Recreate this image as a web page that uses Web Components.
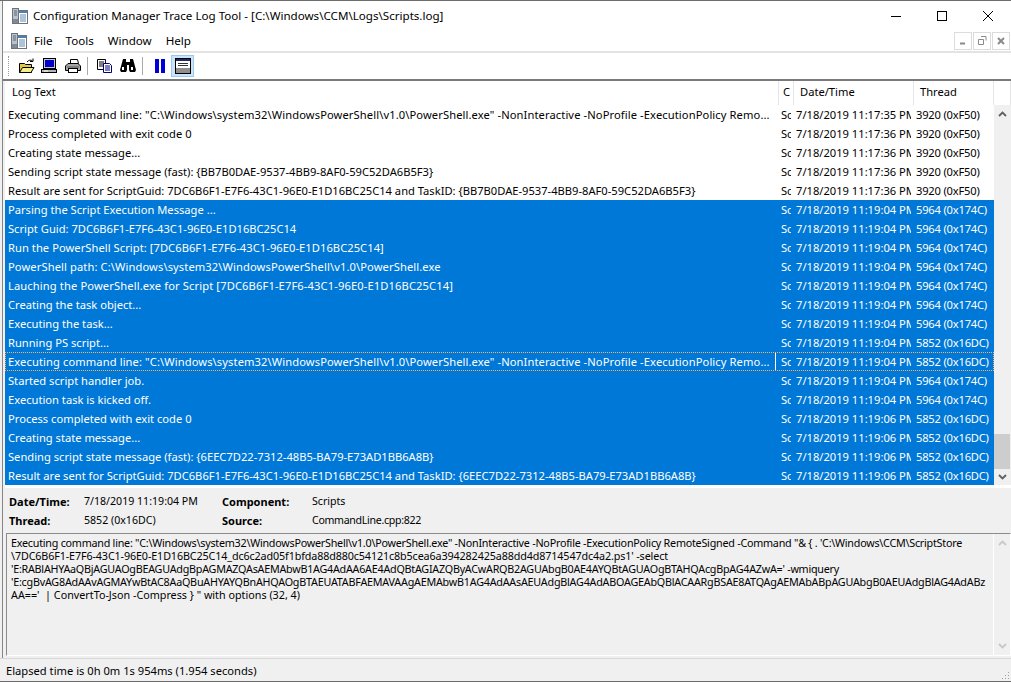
<!DOCTYPE html>
<html>
<head>
<meta charset="utf-8">
<title>Trace Log</title>
<style>
html, body { margin: 0; height: 100%; overflow: hidden; background: #f0f0f0; }
body { font: 11.17px "Noto Sans", "Liberation Sans", sans-serif; }
</style>
</head>
<body>
<trace-window>
  <title-bar>Configuration Manager Trace Log Tool - [C:\Windows\CCM\Logs\Scripts.log]</title-bar>
  <menu-bar></menu-bar>
  <tool-bar></tool-bar>
  <log-list></log-list>
  <detail-pane></detail-pane>
  <status-bar>Elapsed time is 0h 0m 1s 954ms (1.954 seconds)</status-bar>
</trace-window>

<script>
// same little server + page picture in the title bar and the menu bar
const docIcon = `<svg width="16" height="16" viewBox="0 0 16 16"><rect x="0.5" y="0.5" width="6" height="15" fill="#b9c2cc" stroke="#6a7480"/><path d="M2 3h3M2 5h3M2 7h3" stroke="#5c6670"/><rect x="1" y="11" width="5" height="4" fill="#7f8a96"/><rect x="6.500" y="2.500" width="9" height="13" fill="#fff" stroke="#6a7480"/><rect x="7" y="3" width="8" height="2" fill="#4d7fb5"/><path d="M8 7h6M8 9h6M8 11h6M8 13h6" stroke="#5f88b0"/></svg>`;

class TraceWindow extends HTMLElement {
    constructor() {
        super();
        this.attachShadow({ mode: "open" });
        this.shadowRoot.innerHTML = `<style>
            :host { display: flex; flex-direction: column; width: 1011px; height: 682px; box-sizing: border-box; padding-left: 3px;
                border-top: 1px solid #6d6d6d; border-bottom: 1px solid #6d6d6d;
                background: linear-gradient(90deg, #f0f0f0 2px, #858585 2px, #858585 3px, #f0f0f0 3px); }
        </style><slot></slot>`;
    }
}

class TitleBar extends HTMLElement {
    constructor() {
        super();
        this.attachShadow({ mode: "open" });
        this.shadowRoot.innerHTML = `<style>
            :host { display: flex; align-items: center; height: 29px; background: #fff; padding-left: 9px; color: #000; font-size: 11.6px; flex: none; }
            .t { margin-left: 5px; flex: 1; white-space: nowrap; }
            .b { width: 46px; height: 29px; display: flex; align-items: center; justify-content: center; }
        </style>
        ${docIcon}<span class="t"><slot></slot></span>
        <div class="b"><svg width="10" height="10"><path d="M0 5.500h10" stroke="#000"/></svg></div>
        <div class="b"><svg width="10" height="10"><rect x=".5" y=".5" width="9" height="9" fill="none" stroke="#000"/></svg></div>
        <div class="b"><svg width="10" height="10"><path d="M0 0l10 10M10 0L0 10" stroke="#000"/></svg></div>`;
    }
}

class MenuBar extends HTMLElement {
    constructor() {
        super();
        this.attachShadow({ mode: "open" });
        this.shadowRoot.innerHTML = `<style>
            :host { display: flex; align-items: center; height: 21px; background: #fff; padding-left: 8px; flex: none; border-bottom: 2px solid #e3e3e3; font-size: 11.6px; }
            span { margin-left: 14px; }
            span:first-of-type { margin-left: 7px; }
            span:nth-of-type(2) { margin-left: 13px; }
            .sp { flex: 1; margin: 0; }
            .m { width: 16px; height: 16px; border: 1px solid #dcdcdc; margin-right: 1px; display: flex; align-items: center; justify-content: center; background: #fff; }
        </style>
        ${docIcon}<span>File</span><span>Tools</span><span>Window</span><span>Help</span><i class="sp"></i>
        <div class="m"><svg width="8" height="8"><path d="M1 6.500h5" stroke="#8a8a8a" stroke-width="2"/></svg></div>
        <div class="m"><svg width="9" height="9"><path d="M3 .5h5v4M.5 3.500h5v5h-5z" fill="none" stroke="#8a8a8a"/></svg></div>
        <div class="m"><svg width="8" height="8"><path d="M1 1l6 6M7 1L1 7" stroke="#8a8a8a" stroke-width="2"/></svg></div>`;
    }
}

class ToolBar extends HTMLElement {
    constructor() {
        super();
        this.attachShadow({ mode: "open" });
        this.shadowRoot.innerHTML = `<style>
            :host { display: flex; align-items: center; height: 26px; background: #fff; padding-left: 5px; flex: none; border-bottom: 2px solid #7a7a7a; }
            .grip { width: 1px; height: 20px; border-left: 1px dotted #999; margin-right: 5px; }
            .i { width: 23px; height: 22px; display: flex; align-items: center; justify-content: center; box-sizing: border-box; }
            .sep { width: 1px; height: 18px; background: #aaa; margin: 0 5px 0 3px; }
            .on { background: #cce4f7; border: 1px solid #99c9ef; }
        </style>
        <div class="grip"></div>
        <div class="i"><svg width="16" height="16"><path d="M.5 5.500h5l1 1h6v8H.5z" fill="#e0c84a" stroke="#000"/><path d="M.5 14.500l3-5h11.500l-3 5z" fill="#f6ee8a" stroke="#000"/><path d="M8 4c1.500-2 4-2.500 5.500-1M14 .5v3h-3" fill="none" stroke="#000"/></svg></div>
        <div class="i"><svg width="17" height="16"><rect x="2.500" y=".5" width="12" height="10" fill="#c8c8c8" stroke="#000"/><rect x="4" y="2" width="9" height="7" fill="#0000c8"/><rect x=".5" y="11.500" width="15" height="3" fill="#b4b4b4" stroke="#000"/><path d="M3 13h4" stroke="#fff"/></svg></div>
        <div class="i"><svg width="16" height="16"><path d="M5.500 1.500h7l1 4h-8z" fill="#fff" stroke="#000"/><path d="M.5 8l2.500-2.500h10L15.500 8v4.500H.5z" fill="#a8a8a8" stroke="#000"/><rect x="3.500" y="10.500" width="9" height="4" fill="#fff" stroke="#000"/><path d="M2 9h12" stroke="#555"/></svg></div>
        <div class="sep"></div>
        <div class="i"><svg width="16" height="16"><path d="M.5 1.500h8v10h-8z" fill="#fff" stroke="#000"/><path d="M2 4h5M2 6h5M2 8h5" stroke="#000"/><path d="M6.500 5.500h6l2 2v7h-8z" fill="#fff" stroke="#000080"/><path d="M8 8h5M8 10h5M8 12h5" stroke="#000080"/></svg></div>
        <div class="i"><svg width="16" height="16"><path d="M3 1h3v3h4V1h3l3 11-1 2h-5l-1-2V7H7v5l-1 2H1l-1-2z" fill="#000"/><rect x="2" y="9" width="2" height="3" fill="#fff"/><rect x="11" y="9" width="2" height="3" fill="#fff"/></svg></div>
        <div class="sep"></div>
        <div class="i"><svg width="16" height="16"><rect x="3" y="1" width="4" height="14" fill="#0000d8"/><rect x="9" y="1" width="4" height="14" fill="#0000d8"/></svg></div>
        <div class="i on"><svg width="16" height="16"><rect x=".5" y=".5" width="15" height="15" fill="#fff" stroke="#000"/><rect x="1" y="1" width="14" height="2" fill="#1a2a6a"/><path d="M3 5.500h10M3 7.500h10" stroke="#333"/><rect x="1" y="10" width="14" height="5" fill="#8f8f8f"/></svg></div>`;
    }
}

class LogRow extends HTMLElement {
    constructor() {
        super();
        this.attachShadow({ mode: "open" });
        this.shadowRoot.innerHTML = `<style>
            :host { display: grid; grid-template-columns: 774px 15px 120px 80px; height: 19px; line-height: 19px; white-space: nowrap; color: #000; box-sizing: border-box; }
            :host([sel]) { background: #0078d7; color: #fff; }
            :host([focus]) { outline: 1px dotted #ffb060; outline-offset: -1px; }
            div { overflow: hidden; box-sizing: border-box; }
            .l { padding-left: 3px; margin-right: 3px; }
            .c { padding-left: 2px; margin-right: 3px; }
            .d { padding-left: 2px; margin-right: 3px; }
            .h { padding-left: 2px; letter-spacing: -.2px; }
            :host([focus]) .l { border-right: 1px solid #fff; }
        </style>
        <div class="l"></div><div class="c">Scripts</div><div class="d"></div><div class="h"></div>`;
    }
    connectedCallback() {
        const r = this.shadowRoot;
        const l = r.querySelector(".l");
        l.textContent = this.getAttribute("text");
        if (this.hasAttribute("ls")) l.style.letterSpacing = this.getAttribute("ls") + "px";
        r.querySelector(".d").textContent = this.getAttribute("date");
        r.querySelector(".h").textContent = this.getAttribute("thread");
    }
}

const GUID = "7DC6B6F1-E7F6-43C1-96E0-E1D16BC25C14";
const CMD = 'Executing command line: "C:\\Windows\\system32\\WindowsPowerShell\\v1.0\\PowerShell.exe" -NonInteractive -NoProfile -ExecutionPolicy Remo...';
const T1 = "3920 (0xF50)", T2 = "5964 (0x174C)", T3 = "5852 (0x16DC)";
// text, date, thread, selected (2 = has the focus too), letter spacing
const rows = [
    [CMD, "7/18/2019 11:17:35 PM", T1, 0, .1],
    ["Process completed with exit code 0", "7/18/2019 11:17:36 PM", T1],
    ["Creating state message...", "7/18/2019 11:17:36 PM", T1],
    ["Sending script state message (fast): {BB7B0DAE-9537-4BB9-8AF0-59C52DA6B5F3}", "7/18/2019 11:17:36 PM", T1],
    ["Result are sent for ScriptGuid: " + GUID + " and TaskID: {BB7B0DAE-9537-4BB9-8AF0-59C52DA6B5F3}", "7/18/2019 11:17:36 PM", T1],
    ["Parsing the Script Execution Message ...", "7/18/2019 11:19:04 PM", T2, 1],
    ["Script Guid: " + GUID, "7/18/2019 11:19:04 PM", T2, 1],
    ["Run the PowerShell Script: [" + GUID + "]", "7/18/2019 11:19:04 PM", T2, 1, .05],
    ["PowerShell path: C:\\Windows\\system32\\WindowsPowerShell\\v1.0\\PowerShell.exe", "7/18/2019 11:19:04 PM", T2, 1, .1],
    ["Lauching the PowerShell.exe for Script [" + GUID + "]", "7/18/2019 11:19:04 PM", T2, 1, .12],
    ["Creating the task object...", "7/18/2019 11:19:04 PM", T2, 1],
    ["Executing the task...", "7/18/2019 11:19:04 PM", T2, 1],
    ["Running PS script...", "7/18/2019 11:19:04 PM", T3, 1],
    [CMD, "7/18/2019 11:19:04 PM", T3, 2, .1],
    ["Started script handler job.", "7/18/2019 11:19:04 PM", T2, 1],
    ["Execution task is kicked off.", "7/18/2019 11:19:04 PM", T2, 1],
    ["Process completed with exit code 0", "7/18/2019 11:19:06 PM", T3, 1],
    ["Creating state message...", "7/18/2019 11:19:06 PM", T3, 1],
    ["Sending script state message (fast): {6EEC7D22-7312-48B5-BA79-E73AD1BB6A8B}", "7/18/2019 11:19:06 PM", T3, 1],
    ["Result are sent for ScriptGuid: " + GUID + " and TaskID: {6EEC7D22-7312-48B5-BA79-E73AD1BB6A8B}", "7/18/2019 11:19:06 PM", T3, 1],
];

class LogList extends HTMLElement {
    constructor() {
        super();
        this.attachShadow({ mode: "open" });
        this.shadowRoot.innerHTML = `<style>
            :host { display: grid; grid-template-columns: 989px 1fr; grid-template-rows: 24px 380px; background: #fff; flex: none; border-left: 2px solid; border-image: linear-gradient(90deg, #f0f0f0 50%, #6d6d6d 50%) 1; box-sizing: border-box; height: 407px; }
            .head { grid-column: 1 / 3; display: grid; grid-template-columns: 774px 15px 120px 80px 1fr; }
            .head div { border-right: 1px solid #e5e5e5; padding-left: 7px; line-height: 22px; overflow: hidden; white-space: nowrap; }
            .rows { overflow: hidden; }
            .bar { background: #f0f0f0; display: flex; flex-direction: column; justify-content: space-between; align-items: center; height: 380px; position: relative; }
            .arrow { height: 17px; display: flex; align-items: center; }
            .thumb { position: absolute; top: 329px; left: 0; right: 1px; height: 35px; background: #cdcdcd; }
        </style>
        <div class="head"><div>Log Text</div><div style="padding-left:4px">C</div><div style="padding-left:6px">Date/Time</div><div style="padding-left:6px">Thread</div><div></div></div>
        <div class="rows"></div>
        <div class="bar">
            <div class="arrow"><svg width="9" height="6"><path d="M1 5l3.500-3.500L8 5" fill="none" stroke="#606060" stroke-width="1.800"/></svg></div>
            <div class="thumb"></div>
            <div class="arrow"><svg width="9" height="6"><path d="M1 1l3.500 3.500L8 1" fill="none" stroke="#606060" stroke-width="1.800"/></svg></div>
        </div>`;
        const box = this.shadowRoot.querySelector(".rows");
        for (const [text, date, thread, sel, ls] of rows) {
            const r = document.createElement("log-row");
            r.setAttribute("text", text);
            r.setAttribute("date", date);
            r.setAttribute("thread", thread);
            if (ls) r.setAttribute("ls", ls);
            if (sel) r.setAttribute("sel", "");
            if (sel === 2) r.setAttribute("focus", "");
            box.appendChild(r);
        }
    }
}

class DetailPane extends HTMLElement {
    constructor() {
        super();
        this.attachShadow({ mode: "open" });
        this.shadowRoot.innerHTML = `<style>
            :host { display: flex; flex-direction: column; flex: 1; min-height: 0; }
            .info { display: grid; grid-template-columns: 75px 138px 90px 1fr; grid-auto-rows: 19px; padding: 4px 0 0 6px; height: 45px; flex: none; box-sizing: border-box; line-height: 19px; }
            b { font-weight: 700; font-size: 11px; }
            .info span { font-size: 10.6px; white-space: nowrap; }
            .msg { flex: 1; margin-left: 3px; border: 1px solid #8c8c8c; border-bottom-color: #fff; border-right-color: #fff; display: flex; min-height: 0; }
            .txt { flex: 1; padding: 3px 0 0 4px; line-height: 13px; white-space: nowrap; font-size: 10.75px; overflow: hidden; }
            .txt span { display: table; }
            .sb { width: 17px; border-left: 1px solid #fff; display: flex; flex-direction: column; justify-content: space-between; align-items: center; padding: 6px 0; box-sizing: border-box; }
        </style>
        <div class="info">
            <b>Date/Time:</b><span>7/18/2019 11:19:04 PM</span><b>Component:</b><span>Scripts</span>
            <b>Thread:</b><span>5852 (0x16DC)</span><b>Source:</b><span style="letter-spacing:-.3px">CommandLine.cpp:822</span>
        </div>
        <div class="msg">
            <div class="txt">
                <span data-w="951">Executing command line: "C:\\Windows\\system32\\WindowsPowerShell\\v1.0\\PowerShell.exe" -NonInteractive -NoProfile -ExecutionPolicy RemoteSigned -Command "&amp; { . 'C:\\Windows\\CCM\\ScriptStore</span>
                <span data-w="657">\\7DC6B6F1-E7F6-43C1-96E0-E1D16BC25C14_dc6c2ad05f1bfda88d880c54121c8b5cea6a394282425a88dd4d8714547dc4a2.ps1' -select</span>
                <span data-w="828">'E:RABlAHYAaQBjAGUAOgBEAGUAdgBpAGMAZQAsAEMAbwB1AG4AdAA6AE4AdQBtAGIAZQByACwARQB2AGUAbgB0AE4AYQBtAGUAOgBTAHQAcgBpAG4AZwA=' -wmiquery</span>
                <span data-w="974">'E:cgBvAG8AdAAvAGMAYwBtAC8AaQBuAHYAYQBnAHQAOgBTAEUATABFAEMAVAAgAEMAbwB1AG4AdAAsAEUAdgBlAG4AdABOAGEAbQBlACAARgBSAE8ATQAgAEMAbABpAGUAbgB0AEUAdgBlAG4AdABz</span>
                <span data-w="289">AA==' &nbsp;| ConvertTo-Json -Compress } " with options (32, 4)</span>
            </div>
            <div class="sb">
                <svg width="9" height="6"><path d="M1 5l3.500-3.500L8 5" fill="none" stroke="#c8c8c8" stroke-width="1.800"/></svg>
                <svg width="9" height="6"><path d="M1 1l3.500 3.500L8 1" fill="none" stroke="#c8c8c8" stroke-width="1.800"/></svg>
            </div>
        </div>`;
    }
    connectedCallback() {
        // squeeze each line to the width it has in the tool, the font here is not the same
        for (const line of this.shadowRoot.querySelectorAll("[data-w]")) {
            const extra = line.dataset.w - line.getBoundingClientRect().width;
            line.style.letterSpacing = (extra / line.textContent.length) + "px";
        }
    }
}

class StatusBar extends HTMLElement {
    constructor() {
        super();
        this.attachShadow({ mode: "open" });
        this.shadowRoot.innerHTML = `<style>
            :host { display: flex; align-items: center; height: 23px; padding-left: 6px; flex: none; border-top: 1px solid #d8d8d8; box-sizing: border-box; position: relative; margin: 2px 0 0 -3px; background: #f0f0f0; }
            svg { position: absolute; right: 1px; bottom: 1px; }
        </style><slot></slot><svg width="10" height="10"><path d="M8 2h1v1H8zM5 5h1v1H5zM8 5h1v1H8zM2 8h1v1H2zM5 8h1v1H5zM8 8h1v1H8z" fill="#a0a0a0"/></svg>`;
    }
}

customElements.define("trace-window", TraceWindow);
customElements.define("title-bar", TitleBar);
customElements.define("menu-bar", MenuBar);
customElements.define("tool-bar", ToolBar);
customElements.define("log-row", LogRow);
customElements.define("log-list", LogList);
customElements.define("detail-pane", DetailPane);
customElements.define("status-bar", StatusBar);
</script>
</body>
</html>
